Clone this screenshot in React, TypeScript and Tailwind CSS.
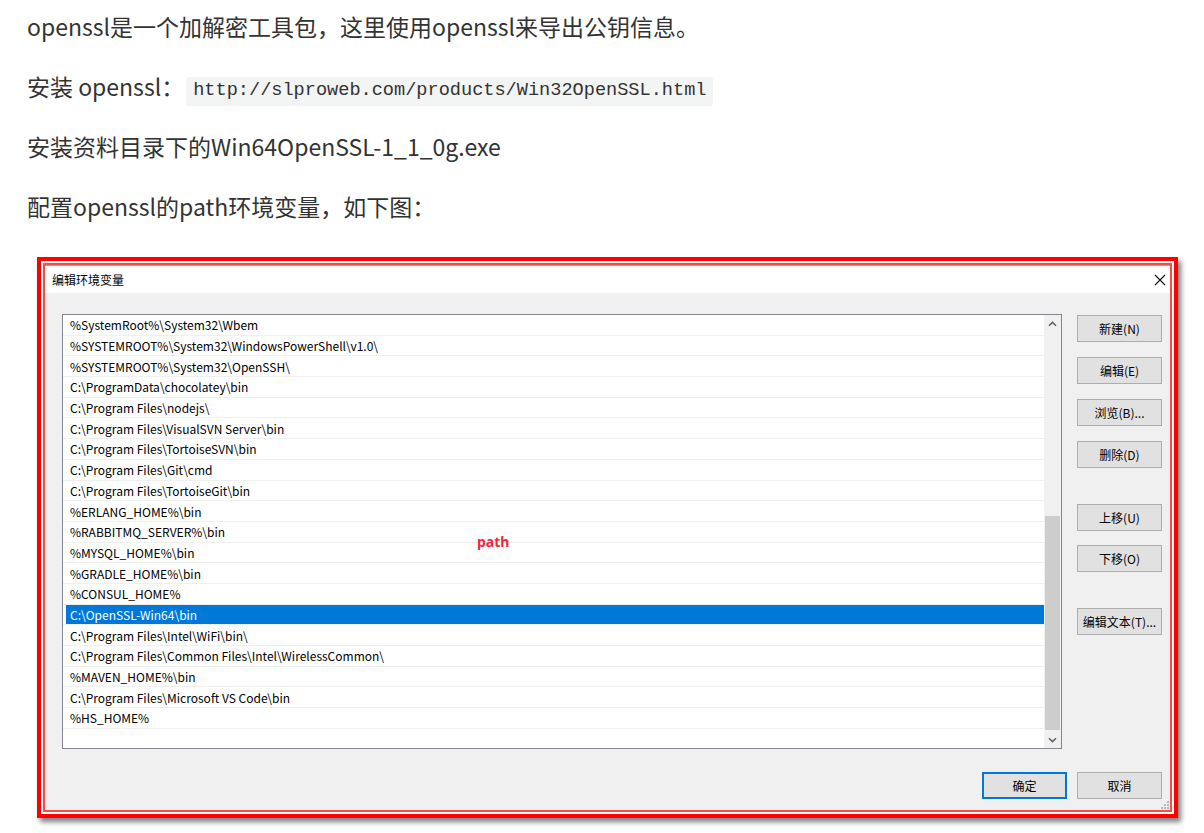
import React from 'react';

const paths = [
  '%SystemRoot%\\System32\\Wbem',
  '%SYSTEMROOT%\\System32\\WindowsPowerShell\\v1.0\\',
  '%SYSTEMROOT%\\System32\\OpenSSH\\',
  'C:\\ProgramData\\chocolatey\\bin',
  'C:\\Program Files\\nodejs\\',
  'C:\\Program Files\\VisualSVN Server\\bin',
  'C:\\Program Files\\TortoiseSVN\\bin',
  'C:\\Program Files\\Git\\cmd',
  'C:\\Program Files\\TortoiseGit\\bin',
  '%ERLANG_HOME%\\bin',
  '%RABBITMQ_SERVER%\\bin',
  '%MYSQL_HOME%\\bin',
  '%GRADLE_HOME%\\bin',
  '%CONSUL_HOME%',
  'C:\\OpenSSL-Win64\\bin',
  'C:\\Program Files\\Intel\\WiFi\\bin\\',
  'C:\\Program Files\\Common Files\\Intel\\WirelessCommon\\',
  '%MAVEN_HOME%\\bin',
  'C:\\Program Files\\Microsoft VS Code\\bin',
  '%HS_HOME%',
];

const SELECTED = 14;

const sideButtons = [
  { label: '新建(N)', mt: 'mt-[1px]' },
  { label: '编辑(E)', mt: 'mt-[15px]' },
  { label: '浏览(B)...', mt: 'mt-[15px]' },
  { label: '删除(D)', mt: 'mt-[15px]' },
  { label: '上移(U)', mt: 'mt-[36px]' },
  { label: '下移(O)', mt: 'mt-[14px]' },
  { label: '编辑文本(T)...', mt: 'mt-[36px]' },
];

function WinButton({ label, primary, className = '' }: { label: string; primary?: boolean; className?: string }) {
  return (
    <div
      className={
        'flex h-[27px] w-[85px] items-center justify-center bg-[#e1e1e1] text-[12px] text-black ' +
        (primary ? 'border-2 border-[#0078d7] ' : 'border border-[#adadad] ') +
        className
      }
    >
      {label}
    </div>
  );
}

function Chevron({ down }: { down?: boolean }) {
  return (
    <svg width="9" height="6" viewBox="0 0 9 6">
      <path
        d={down ? 'M1 1.2 L4.5 4.6 L8 1.2' : 'M1 4.8 L4.5 1.4 L8 4.8'}
        fill="none"
        stroke="#606060"
        strokeWidth="1.5"
      />
    </svg>
  );
}

export default function App() {
  return (
    <div className="min-h-screen bg-white pb-[20px]">
      {/* article text */}
      <div className="pl-[27px] pt-[11px] text-[23px] leading-[30px] text-[#333] [font-family:'Noto_Sans_CJK_SC',sans-serif]">
        <p className="h-[30px]">openssl是一个加解密工具包，这里使用openssl来导出公钥信息。</p>
        <p className="mt-[30px] flex h-[30px] items-center">
          <span>安装 openssl：</span>
          <code className="ml-[2px] mt-[10px] flex h-[29px] items-center rounded-[3px] bg-[#f3f4f4] px-[7px] text-[18.6px] text-[#333] [font-family:'Liberation_Mono',monospace]">
            http://slproweb.com/products/Win32OpenSSL.html
          </code>
        </p>
        <p className="mt-[30px] h-[30px]">安装资料目录下的Win64OpenSSL-1_1_0g.exe</p>
        <p className="mt-[30px] h-[30px]">配置openssl的path环境变量，如下图：</p>
      </div>

      {/* screenshot of the dialog, boxed in red */}
      <div className="ml-[37px] mt-[36px] h-[561px] w-[1141px] border-4 border-[#ff0000] bg-white p-[2px] shadow-[3px_4px_5px_rgba(0,0,0,0.5)]">
        <div className="flex h-full flex-col border-2 border-[#ff4848] [font-family:'Noto_Sans_CJK_SC',sans-serif]">
          <div className="h-px bg-[#7fb2e0]" />
          <div className="flex h-[27px] items-center justify-between bg-white pl-[7px] pr-[4px] text-[12px] text-black">
            <span>编辑环境变量</span>
            <svg width="12" height="12" viewBox="0 0 12 12">
              <path d="M1 1 L11 11 M11 1 L1 11" stroke="#111" strokeWidth="1.1" />
            </svg>
          </div>

          <div className="relative flex flex-1 flex-col bg-[#f0f0f0] pl-[17px] pr-[8px] pt-[21px]">
            <div className="flex">
              {/* list box */}
              <div className="relative flex h-[435px] w-[1000px] border border-[#828790] bg-white">
                <div className="flex-1">
                  {paths.map((p, i) => (
                    <div key={i} className="h-[20.7px] border-b border-[#efefef] pl-[3px]">
                      <div
                        className={
                          'flex h-full items-center pl-[4px] pt-px text-[12px] ' +
                          (i === SELECTED ? 'bg-[#0078d7] text-white' : 'text-black')
                        }
                      >
                        {p}
                      </div>
                    </div>
                  ))}
                </div>
                <div className="flex w-[17px] flex-col bg-[#f0f0f0]">
                  <div className="flex h-[17px] items-center justify-center">
                    <Chevron />
                  </div>
                  <div className="h-[399px] px-[1px]">
                    <div className="mt-[184px] h-[214px] bg-[#cdcdcd]" />
                  </div>
                  <div className="flex h-[17px] items-center justify-center">
                    <Chevron down />
                  </div>
                </div>
                <span className="absolute left-[414px] top-[216px] text-[14px] font-bold text-[#f0283c] [font-family:'Noto_Sans',sans-serif]">
                  path
                </span>
              </div>

              {/* side buttons */}
              <div className="ml-[15px] flex flex-col">
                {sideButtons.map((b) => (
                  <WinButton key={b.label} label={b.label} className={b.mt} />
                ))}
              </div>
            </div>

            <div className="mt-[23px] flex justify-end gap-[10px]">
              <WinButton label="确定" primary />
              <WinButton label="取消" />
            </div>

            <svg className="absolute bottom-[1px] right-[1px]" width="8" height="8" viewBox="0 0 8 8">
              <rect x="6" y="0" width="2" height="2" fill="#b8b8b8" />
              <rect x="3" y="3" width="2" height="2" fill="#b8b8b8" />
              <rect x="6" y="3" width="2" height="2" fill="#b8b8b8" />
              <rect x="0" y="6" width="2" height="2" fill="#b8b8b8" />
              <rect x="3" y="6" width="2" height="2" fill="#b8b8b8" />
              <rect x="6" y="6" width="2" height="2" fill="#b8b8b8" />
            </svg>
          </div>
        </div>
      </div>
    </div>
  );
}
